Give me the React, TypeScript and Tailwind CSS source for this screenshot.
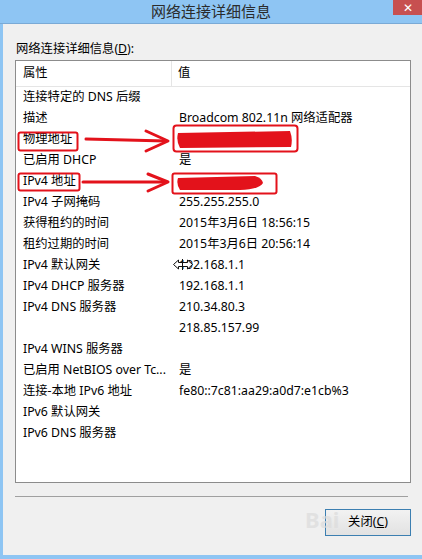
const rows: [string, string][] = [
  ["连接特定的 DNS 后缀", ""],
  ["描述", "Broadcom 802.11n 网络适配器"],
  ["物理地址", ""],
  ["已启用 DHCP", "是"],
  ["IPv4 地址", ""],
  ["IPv4 子网掩码", "255.255.255.0"],
  ["获得租约的时间", "2015年3月6日 18:56:15"],
  ["租约过期的时间", "2015年3月6日 20:56:14"],
  ["IPv4 默认网关", "192.168.1.1"],
  ["IPv4 DHCP 服务器", "192.168.1.1"],
  ["IPv4 DNS 服务器", "210.34.80.3"],
  ["", "218.85.157.99"],
  ["IPv4 WINS 服务器", ""],
  ["已启用 NetBIOS over Tc...", "是"],
  ["连接-本地 IPv6 地址", "fe80::7c81:aa29:a0d7:e1cb%3"],
  ["IPv6 默认网关", ""],
  ["IPv6 DNS 服务器", ""],
];

const font = { fontFamily: '"Noto Sans", "Noto Sans CJK SC", sans-serif' };

function Annotations() {
  const red = "#e3121b";
  return (
    <svg className="absolute left-0 top-0 pointer-events-none" width="422" height="559" viewBox="0 0 422 559">
      {/* boxes round the labels */}
      <rect x="18.5" y="132.5" width="59" height="18" rx="2" fill="none" stroke={red} strokeWidth="2" />
      <rect x="18.5" y="173.5" width="61" height="17" rx="2" fill="none" stroke={red} strokeWidth="2" />
      {/* boxes round the values */}
      <rect x="173.5" y="125.5" width="124" height="26" rx="3" fill="none" stroke={red} strokeWidth="2" />
      <rect x="172.5" y="173.5" width="104" height="20" rx="2" fill="none" stroke={red} strokeWidth="2" />
      {/* scribbles over the values */}
      <path d="M178 133 L290 131 Q293 139 291 147 L180 148 Q176 141 178 133 Z" fill={red} />
      <path d="M178 178 L255 176 Q262 178 263 183 Q260 189 240 190 L180 190 Q176 184 178 178 Z" fill={red} />
      {/* arrows */}
      <path d="M86 139 L166 141" stroke={red} strokeWidth="3" strokeLinecap="round" />
      <path d="M146 131 L168 141 L146 151" fill="none" stroke={red} strokeWidth="3" strokeLinecap="round" strokeLinejoin="round" />
      <path d="M83 182 L166 182" stroke={red} strokeWidth="3" strokeLinecap="round" />
      <path d="M148 174 L168 182 L148 191" fill="none" stroke={red} strokeWidth="3" strokeLinecap="round" strokeLinejoin="round" />
      {/* column resize cursor */}
      <path
        d="M173.5 264.5 L178.5 260 L178.5 262.5 L187.5 262.5 L187.5 260 L192.5 264.5 L187.5 269 L187.5 266.5 L178.5 266.5 L178.5 269 Z"
        fill="#fff"
        stroke="#111"
        strokeWidth="1"
        strokeLinejoin="round"
      />
      <path d="M182.5 259 L182.5 270" stroke="#111" strokeWidth="1" />
    </svg>
  );
}

export default function App() {
  return (
    <div className="relative w-[422px] h-[559px] bg-[#8ec5f3] flex flex-col text-[12.3px] text-black" style={font}>
      <div className="relative h-[24px] flex items-center justify-center border-b border-[#7aaad6]">
        <span className="text-[15px] text-[#2b2b2b] leading-none">网络连接详细信息</span>
        <div className="absolute right-0 top-0 w-[29px] h-[15px] bg-[#c75050] flex items-center justify-center text-white text-[12px] leading-none">
          ✕
        </div>
      </div>

      <div className="flex-1 ml-[3px] mb-[4px] bg-[#f0f0f0] flex flex-col pl-[12px] pr-[11px]">
        <div className="pt-[17px] pl-[1px] h-[36px] leading-[16px]">
          网络连接详细信息(<span className="underline">D</span>):
        </div>

        <div className="relative w-[396px] h-[423px] border border-[#8c8c8c] bg-white">
          <div className="flex h-[26px] items-center border-b border-[#e5e5e5]">
            <div className="w-[156px] pl-[7px] border-r border-[#e5e5e5] h-full flex items-center">属性</div>
            <div className="pl-[6px]">值</div>
          </div>
          {rows.map(([k, v], i) => (
            <div key={i} className="flex h-[21px] items-center whitespace-nowrap">
              <div className="w-[156px] pl-[7px]">{k}</div>
              <div className="pl-[7px]">{v}</div>
            </div>
          ))}
        </div>

        <div className="mt-[13px] w-[393px] h-px bg-[#a0a0a0]" />

        <div className="flex justify-end mt-[12px]">
          <div className="w-[86px] h-[27px] border border-[#3c7fb1] bg-gradient-to-b from-[#f2f2f2] to-[#e2e2e2] flex items-center justify-center">
            关闭(<span className="underline">C</span>)
          </div>
        </div>
      </div>

      <Annotations />
      <div className="absolute left-[305px] top-[508px] text-[22px] font-bold text-[#dcdcdc] opacity-70 pointer-events-none leading-none">
        Bai
      </div>
    </div>
  );
}
